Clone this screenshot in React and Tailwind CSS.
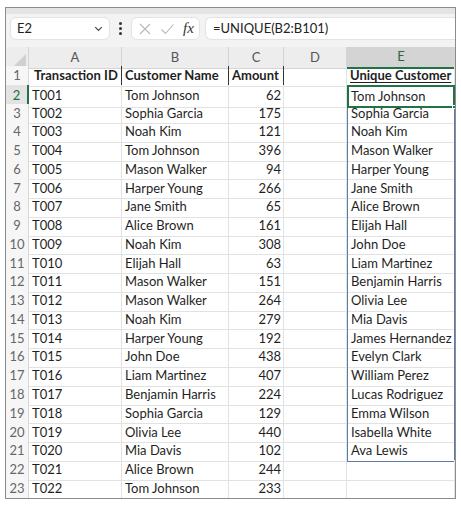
import React from 'react';

const rows = [
    ['T001', 'Tom Johnson', 62, 'Tom Johnson'],
    ['T002', 'Sophia Garcia', 175, 'Sophia Garcia'],
    ['T003', 'Noah Kim', 121, 'Noah Kim'],
    ['T004', 'Tom Johnson', 396, 'Mason Walker'],
    ['T005', 'Mason Walker', 94, 'Harper Young'],
    ['T006', 'Harper Young', 266, 'Jane Smith'],
    ['T007', 'Jane Smith', 65, 'Alice Brown'],
    ['T008', 'Alice Brown', 161, 'Elijah Hall'],
    ['T009', 'Noah Kim', 308, 'John Doe'],
    ['T010', 'Elijah Hall', 63, 'Liam Martinez'],
    ['T011', 'Mason Walker', 151, 'Benjamin Harris'],
    ['T012', 'Mason Walker', 264, 'Olivia Lee'],
    ['T013', 'Noah Kim', 279, 'Mia Davis'],
    ['T014', 'Harper Young', 192, 'James Hernandez'],
    ['T015', 'John Doe', 438, 'Evelyn Clark'],
    ['T016', 'Liam Martinez', 407, 'William Perez'],
    ['T017', 'Benjamin Harris', 224, 'Lucas Rodriguez'],
    ['T018', 'Sophia Garcia', 129, 'Emma Wilson'],
    ['T019', 'Olivia Lee', 440, 'Isabella White'],
    ['T020', 'Mia Davis', 102, 'Ava Lewis'],
    ['T021', 'Alice Brown', 244, ''],
    ['T022', 'Tom Johnson', 233, ''],
];

const cols = 'grid grid-cols-[23px_93px_107px_55px_63px_1fr]';
const cell = 'border-r border-b border-[#e2e2e2] flex items-center overflow-hidden whitespace-nowrap';

const ColHead = ({ label, active }) => (
    <div
        className={
            active
                ? 'bg-[#d4d4d4] text-[#1d6b3f] border-b-2 border-[#217346] flex items-center justify-center'
                : 'bg-[#ededed] text-[#555] border-r border-b border-[#d4d4d4] flex items-center justify-center'
        }
    >
        {label}
    </div>
);

const RowHead = ({ n, active }) => (
    <div
        className={
            active
                ? 'bg-[#e3e3e3] text-[#1d6b3f] border-r-2 border-[#217346] border-b border-b-[#d8d8d8] flex items-center justify-center'
                : 'bg-[#f6f6f6] text-[#666] border-r border-b border-[#d8d8d8] flex items-center justify-center'
        }
    >
        {n}
    </div>
);

export default function App() {
    return (
        <div className="w-[461px] h-[520px] bg-white pt-[7px] pl-[5px] font-['Lato',sans-serif] text-[13px] text-[#1f1f1f]">
            <div className="w-[451px] h-[492px] border border-[#8c8c8c] overflow-hidden flex flex-col">
                {/* Formula bar */}
                <div className="h-[6px] bg-[#e4e4e4]" />
                <div className="h-[33px] bg-[#f3f3f3] flex items-start pt-[3px] pl-[4px]">
                    <div className="w-[100px] h-[23px] bg-white rounded-md border border-[#e3e3e3] flex items-center justify-between pl-[6px] pr-[5px] text-[#222]">
                        <span>E2</span>
                        <svg width="11" height="11" viewBox="0 0 12 12" fill="none" stroke="#444" strokeWidth="1.3">
                            <path d="M2.5 4.5 L6 8 L9.5 4.5" />
                        </svg>
                    </div>
                    <div className="w-[21px] h-[23px] flex flex-col items-center justify-center gap-[2px]">
                        <span className="w-[3px] h-[3px] rounded-full bg-[#333]" />
                        <span className="w-[3px] h-[3px] rounded-full bg-[#333]" />
                        <span className="w-[3px] h-[3px] rounded-full bg-[#333]" />
                    </div>
                    <div className="w-[69px] h-[23px] bg-white rounded-md border border-[#e3e3e3] flex items-center pl-[6px] gap-[8px]">
                        <svg width="14" height="14" viewBox="0 0 14 14" fill="none" stroke="#b8b8b8" strokeWidth="1.1">
                            <path d="M2 2 L12 12 M12 2 L2 12" />
                        </svg>
                        <svg width="15" height="14" viewBox="0 0 15 14" fill="none" stroke="#b8b8b8" strokeWidth="1.1">
                            <path d="M1.5 7.5 L5.5 11.5 L13.5 2.5" />
                        </svg>
                        <span className="font-['Liberation_Serif',serif] italic text-[15px] text-[#333] leading-none">fx</span>
                    </div>
                    <div className="flex-1 h-[23px] bg-white rounded-l-md border border-r-0 border-[#e3e3e3] ml-[5px] flex items-center pl-[7px] text-[#222]">
                        =UNIQUE(B2:B101)
                    </div>
                </div>

                {/* Column headers */}
                <div className={`${cols} h-[19px]`}>
                    <div className="bg-[#ededed] border-r border-b border-[#d4d4d4] flex items-end justify-end p-[2px]">
                        <svg width="12" height="12" viewBox="0 0 12 12">
                            <path d="M12 0 L12 12 L0 12 Z" fill="#d0d0d0" />
                        </svg>
                    </div>
                    <ColHead label="A" />
                    <ColHead label="B" />
                    <ColHead label="C" />
                    <ColHead label="D" />
                    <ColHead label="E" active />
                </div>

                {/* Header row */}
                <div className={`${cols} h-[18.78px]`}>
                    <RowHead n={1} />
                    <div className={`${cell} border-r-[#333] pl-[5px] font-bold`}>Transaction ID</div>
                    <div className={`${cell} border-r-[#333] pl-[3px] font-bold`}>Customer Name</div>
                    <div className={`${cell} border-r-[#333] pl-[3px] font-bold`}>Amount</div>
                    <div className={cell} />
                    <div className={`${cell} pl-[3px] font-bold underline underline-offset-2`}>Unique Customer</div>
                </div>

                {/* Data rows */}
                {rows.map(([id, name, amt, uniq], i) => {
                    const n = i + 2;
                    const first = i === 0;
                    const spill = i < 20;
                    const lastSpill = i === 19;
                    return (
                        <div key={id} className={`${cols} h-[18.78px]`}>
                            <RowHead n={n} active={first} />
                            <div className={`${cell} pl-[3px]`}>{id}</div>
                            <div className={`${cell} pl-[3px]`}>{name}</div>
                            <div className={`${cell} justify-end pr-[2px]`}>{amt}</div>
                            <div className={cell} />
                            {first ? (
                                <div className="relative border-2 border-[#217346] flex items-center pl-[2px] whitespace-nowrap">
                                    {uniq}
                                    <span className="absolute -right-[3px] -bottom-[3px] w-[4px] h-[4px] bg-[#217346] border border-white" />
                                </div>
                            ) : spill ? (
                                <div
                                    className={`border-l border-r border-[#5b7bb0] border-b ${
                                        lastSpill ? 'border-b-[#5b7bb0]' : 'border-b-[#e2e2e2]'
                                    } flex items-center pl-[3px] whitespace-nowrap overflow-hidden`}
                                >
                                    {uniq}
                                </div>
                            ) : (
                                <div className={cell} />
                            )}
                        </div>
                    );
                })}
            </div>
        </div>
    );
}
